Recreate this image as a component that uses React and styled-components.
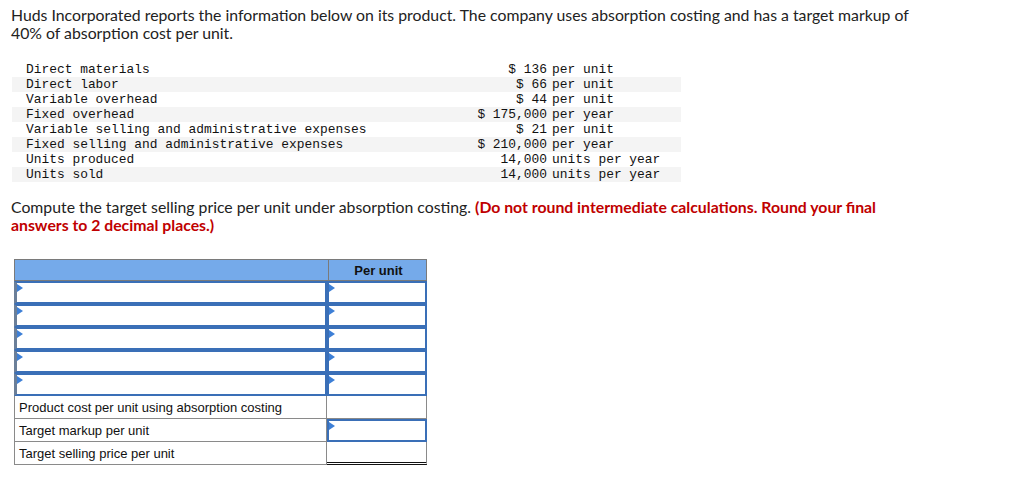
import React from "react";
import styled, { createGlobalStyle } from "styled-components";

const GlobalStyle = createGlobalStyle`
  body {
    margin: 0;
    background: #ffffff;
  }
`;

const facts = [
  { label: "Direct materials", value: "$ 136", unit: "per unit" },
  { label: "Direct labor", value: "$ 66", unit: "per unit" },
  { label: "Variable overhead", value: "$ 44", unit: "per unit" },
  { label: "Fixed overhead", value: "$ 175,000", unit: "per year" },
  { label: "Variable selling and administrative expenses", value: "$ 21", unit: "per unit" },
  { label: "Fixed selling and administrative expenses", value: "$ 210,000", unit: "per year" },
  { label: "Units produced", value: "14,000", unit: "units per year" },
  { label: "Units sold", value: "14,000", unit: "units per year" },
];

const summaryRows = [
  { label: "Product cost per unit using absorption costing", input: false },
  { label: "Target markup per unit", input: true },
  { label: "Target selling price per unit", input: false, total: true },
];

export default function App() {
  return (
    <Page>
      <GlobalStyle />
      <Intro>
        Huds Incorporated reports the information below on its product. The company uses absorption costing and has a target markup of
        40% of absorption cost per unit.
      </Intro>

      <Facts>
        {facts.map(({ label, value, unit }, i) => (
          <FactRow key={label} $striped={i % 2 === 1}>
            <span>{label}</span>
            <Value>{value}</Value>
            <span>{unit}</span>
          </FactRow>
        ))}
      </Facts>

      <Instruction>
        Compute the target selling price per unit under absorption costing.{" "}
        <strong>(Do not round intermediate calculations. Round your final answers to 2 decimal places.)</strong>
      </Instruction>

      <Answer>
        <HeaderRow>
          <HeadCell />
          <HeadCell>Per unit</HeadCell>
        </HeaderRow>
        {[0, 1, 2, 3, 4].map((n) => (
          <Row key={n}>
            <InputCell><Flag /></InputCell>
            <InputCell><Flag /></InputCell>
          </Row>
        ))}
        {summaryRows.map(({ label, input, total }) => (
          <Row key={label}>
            <LabelCell>{label}</LabelCell>
            {input ? (
              <InputCell><Flag /></InputCell>
            ) : (
              <BlankCell $total={total} />
            )}
          </Row>
        ))}
      </Answer>
    </Page>
  );
}

const Page = styled.div`
  padding: 6px 11px 20px 11px;
  font-family: Lato, "Open Sans", sans-serif;
  color: #222;
  width: 1000px;
`;

const Intro = styled.p`
  margin: 0;
  font-size: 15.8px;
  line-height: 18px;
  width: 920px;
`;

const Facts = styled.div`
  margin: 20px 0 0 1px;
  width: 669px;
  font-family: "Liberation Mono", "DejaVu Sans Mono", monospace;
  font-size: 12.9px;
  color: #111;
`;

const FactRow = styled.div`
  display: grid;
  grid-template-columns: 449px 72px 1fr;
  height: 15px;
  line-height: 15px;
  padding-left: 14px;
  background: ${({ $striped }) => ($striped ? "#f4f4f4" : "transparent")};
  span:last-child {
    padding-left: 5px;
  }
`;

const Value = styled.span`
  text-align: right;
  white-space: pre;
`;

const Instruction = styled.p`
  margin: 16px 0 0 0;
  font-size: 15.8px;
  line-height: 18px;
  width: 900px;
  strong {
    color: #c00000;
    font-weight: 700;
  }
`;

const Answer = styled.div`
  margin: 25px 0 0 3px;
  width: 413px;
  font-family: "Liberation Sans", Arial, sans-serif;
  font-size: 13px;
  color: #111;
`;

const HeaderRow = styled.div`
  display: grid;
  grid-template-columns: 313px 100px;
  height: 22px;
  background: #75aaea;
  border: 1px solid #7a7a7a;
  box-sizing: border-box;
`;

const HeadCell = styled.div`
  display: flex;
  align-items: center;
  justify-content: center;
  font-weight: 700;
  & + & {
    border-left: 1px solid #7a7a7a;
  }
`;

const Row = styled.div`
  display: grid;
  grid-template-columns: 313px 100px;
  height: 23px;
`;

const InputCell = styled.div`
  position: relative;
  border: 2px solid #3a6fb7;
  &:first-child {
    border-left: 3px solid #6b7f99;
  }
`;

const Flag = styled.span`
  position: absolute;
  left: 0;
  top: 1px;
  width: 0;
  height: 0;
  border-top: 4px solid transparent;
  border-bottom: 4px solid transparent;
  border-left: 6px solid #3d7fd6;
`;

const LabelCell = styled.div`
  display: flex;
  align-items: center;
  padding-left: 4px;
  border: 1px solid #8a8a8a;
  border-top: none;
`;

const BlankCell = styled.div`
  border-right: 1px solid #8a8a8a;
  border-bottom: ${({ $total }) => ($total ? "3px double #111" : "1px solid #8a8a8a")};
`;
